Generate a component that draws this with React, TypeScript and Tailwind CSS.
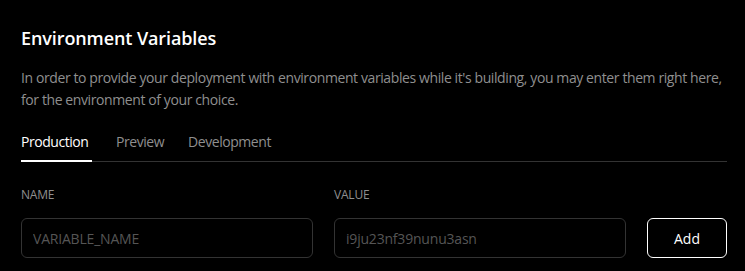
const tabs = ['Production', 'Preview', 'Development']

export default function App() {
  return (
    <div className="min-h-[271px] w-[745px] bg-black pl-[21px] pr-[18px] pt-[24px] font-['Open_Sans',sans-serif] text-white">
      <h2 className="text-[18px] font-semibold leading-[28px] tracking-[-0.1px]">Environment Variables</h2>
      <p className="mt-[15px] text-[14px] leading-[22px] tracking-[-0.4px] text-[#8f8f8f]">
        In order to provide your deployment with environment variables while it's building, you may enter them right here,
        for the environment of your choice.
      </p>

      <div className="mt-[21px] flex gap-[24px] border-b border-[#333]">
        {tabs.map((t, i) => (
          <button
            key={t}
            className={`-mb-px pb-[8px] text-[14px] leading-[20px] tracking-[-0.45px] ${
              i === 0 ? 'min-w-[71px] border-b-2 border-white text-left text-white' : 'border-b-2 border-transparent text-[#8f8f8f]'
            }`}
          >
            {t}
          </button>
        ))}
      </div>

      <div className="mt-[24px] grid grid-cols-[292px_292px_80px] gap-x-[21px]">
        <label className="text-[12px] uppercase leading-[18px] tracking-[-0.2px] text-[#8f8f8f]">Name</label>
        <label className="text-[12px] uppercase leading-[18px] tracking-[-0.2px] text-[#8f8f8f]">Value</label>
        <div />
        <input
          placeholder="VARIABLE_NAME"
          className="mt-[14px] h-[40px] rounded-[6px] border border-[#333] bg-black px-[11px] text-[14px] tracking-[-0.2px] text-white placeholder-[#555] outline-none"
        />
        <input
          placeholder="i9ju23nf39nunu3asn"
          className="mt-[14px] h-[40px] rounded-[6px] border border-[#333] bg-black px-[11px] text-[14px] tracking-[-0.2px] text-white placeholder-[#555] outline-none"
        />
        <button className="mt-[14px] h-[40px] rounded-[6px] border border-white text-[14px] text-white">Add</button>
      </div>
    </div>
  )
}
